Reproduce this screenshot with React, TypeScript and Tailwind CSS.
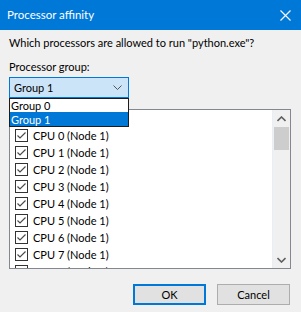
import React from "react";

const cpus = [0, 1, 2, 3, 4, 5, 6, 7, 8];

function CheckBox() {
  return (
    <span className="flex h-[13px] w-[13px] shrink-0 items-center justify-center border border-[#333333] bg-white">
      <svg width="11" height="11" viewBox="0 0 11 11">
        <path d="M1.5 5.5 L4 8 L9.5 2.5" fill="none" stroke="#4a4a4a" strokeWidth="1.2" />
      </svg>
    </span>
  );
}

export default function App() {
  return (
    <div
      className="flex h-[312px] w-[301px] flex-col overflow-hidden bg-[#f0f0f0] text-[11px] text-black"
      style={{ fontFamily: 'Lato, "Noto Sans", sans-serif' }}
    >
      {/* Title bar */}
      <div className="flex h-[30px] shrink-0 items-center justify-between bg-[#0078d7] pl-[7px] pr-[10px] text-white">
        <span className="text-[11.5px] leading-none">Processor affinity</span>
        <svg width="11" height="11" viewBox="0 0 11 11">
          <path d="M0.5 0.5 L10.5 10.5 M10.5 0.5 L0.5 10.5" stroke="#ffffff" strokeWidth="1.1" />
        </svg>
      </div>

      {/* Body */}
      <div className="flex flex-1 flex-col px-[9px]">
        <p className="mt-[5px] whitespace-nowrap leading-4">Which processors are allowed to run "python.exe"?</p>
        <p className="mt-[8px] leading-4">Processor group:</p>

        {/* Combo box */}
        <div className="relative z-10 mt-[2px] w-[120px]">
          <div className="flex h-[21px] items-center justify-between border border-[#0078d7] bg-[#cce4f7] pl-[4px] pr-[6px]">
            <span className="leading-none">Group 1</span>
            <svg width="9" height="6" viewBox="0 0 9 6">
              <path d="M0.5 0.5 L4.5 4.5 L8.5 0.5" fill="none" stroke="#555555" strokeWidth="1" />
            </svg>
          </div>
          <div className="absolute left-0 top-full w-full border border-[#1c1c1c] bg-white">
            <div className="flex h-[13px] items-center pl-[1px] leading-none">Group 0</div>
            <div className="flex h-[14px] items-center bg-[#0078d7] pl-[1px] leading-none text-white">Group 1</div>
          </div>
        </div>

        {/* CPU list */}
        <div className="mt-[11px] flex h-[160px] w-[282px] shrink-0 overflow-hidden border border-[#828790] bg-white">
          <div className="flex-1 overflow-hidden pl-[5px] pt-[17px]">
            {cpus.map((n) => (
              <div key={n} className="flex h-[17px] items-center gap-[5px]">
                <CheckBox />
                <span className="leading-none">CPU {n} (Node 1)</span>
              </div>
            ))}
          </div>
          <div className="flex w-[18px] flex-col items-center border-l border-[#e8eef4] bg-[#f0f0f0]">
            <div className="flex h-[17px] w-full items-center justify-center">
              <svg width="9" height="6" viewBox="0 0 9 6">
                <path d="M0.5 5 L4.5 1 L8.5 5" fill="none" stroke="#606060" strokeWidth="1.6" />
              </svg>
            </div>
            <div className="h-[23px] w-[15px] bg-[#cdcdcd]" />
            <div className="flex-1" />
            <div className="flex h-[17px] w-full items-center justify-center">
              <svg width="9" height="6" viewBox="0 0 9 6">
                <path d="M0.5 1 L4.5 5 L8.5 1" fill="none" stroke="#606060" strokeWidth="1.6" />
              </svg>
            </div>
          </div>
        </div>

        {/* Buttons */}
        <div className="mt-[15px] flex justify-end gap-[11px] pr-[2px]">
          <button className="flex h-[21px] w-[73px] items-center justify-center border-2 border-[#0078d7] bg-[#e1e1e1] leading-none">
            OK
          </button>
          <button className="flex h-[21px] w-[73px] items-center justify-center border border-[#adadad] bg-[#e1e1e1] leading-none">
            Cancel
          </button>
        </div>
      </div>
    </div>
  );
}
